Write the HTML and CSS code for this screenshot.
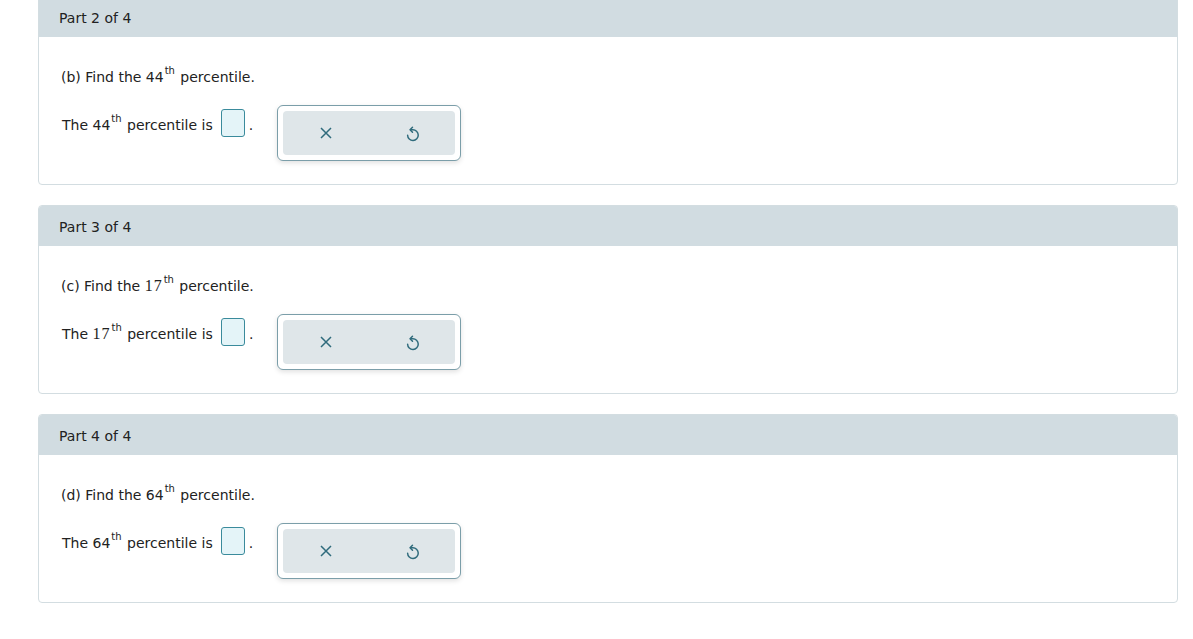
FILE: index.html
```html
<!DOCTYPE html>
<html>
<head>
<meta charset="utf-8">
<link rel="stylesheet" href="styles.css">
</head>
<body>
<div class="parts">
  <section class="card">
    <div class="card-head">Part 2 of 4</div>
    <div class="card-body">
      <p class="q">(b) Find the <span class="num">44</span><sup class="sup">th</sup> percentile.</p>
      <div class="row">
        <div class="answer">
          <span class="label">The <span class="num">44</span><sup class="sup">th</sup> percentile is</span>
          <span class="box"></span><span class="dot">.</span>
        </div>
        <div class="tools">
          <div class="tools-inner">
            <button class="tool"><svg width="12" height="12" viewBox="0 0 12 12"><path d="M1 1 L11 11 M11 1 L1 11" stroke="#2f6b7c" stroke-width="1.5" fill="none"/></svg></button>
            <button class="tool"><svg width="17" height="17" viewBox="0 0 16 16"><path d="M6.2 4.5 H8.2 A5 5 0 1 1 3.4 9.6" stroke="#2f6b7c" stroke-width="1.4" fill="none" stroke-linecap="round"/><path d="M8 2.2 L5.7 4.5 L8 6.8" stroke="#2f6b7c" stroke-width="1.4" fill="none" stroke-linecap="round" stroke-linejoin="round"/></svg></button>
          </div>
        </div>
      </div>
    </div>
  </section>
  <section class="card">
    <div class="card-head">Part 3 of 4</div>
    <div class="card-body">
      <p class="q">(c) Find the <span class="num serif">17</span><sup class="sup">th</sup> percentile.</p>
      <div class="row">
        <div class="answer">
          <span class="label">The <span class="num serif">17</span><sup class="sup">th</sup> percentile is</span>
          <span class="box"></span><span class="dot">.</span>
        </div>
        <div class="tools">
          <div class="tools-inner">
            <button class="tool"><svg width="12" height="12" viewBox="0 0 12 12"><path d="M1 1 L11 11 M11 1 L1 11" stroke="#2f6b7c" stroke-width="1.5" fill="none"/></svg></button>
            <button class="tool"><svg width="17" height="17" viewBox="0 0 16 16"><path d="M6.2 4.5 H8.2 A5 5 0 1 1 3.4 9.6" stroke="#2f6b7c" stroke-width="1.4" fill="none" stroke-linecap="round"/><path d="M8 2.2 L5.7 4.5 L8 6.8" stroke="#2f6b7c" stroke-width="1.4" fill="none" stroke-linecap="round" stroke-linejoin="round"/></svg></button>
          </div>
        </div>
      </div>
    </div>
  </section>
  <section class="card">
    <div class="card-head">Part 4 of 4</div>
    <div class="card-body">
      <p class="q">(d) Find the <span class="num">64</span><sup class="sup">th</sup> percentile.</p>
      <div class="row">
        <div class="answer">
          <span class="label">The <span class="num">64</span><sup class="sup">th</sup> percentile is</span>
          <span class="box"></span><span class="dot">.</span>
        </div>
        <div class="tools">
          <div class="tools-inner">
            <button class="tool"><svg width="12" height="12" viewBox="0 0 12 12"><path d="M1 1 L11 11 M11 1 L1 11" stroke="#2f6b7c" stroke-width="1.5" fill="none"/></svg></button>
            <button class="tool"><svg width="17" height="17" viewBox="0 0 16 16"><path d="M6.2 4.5 H8.2 A5 5 0 1 1 3.4 9.6" stroke="#2f6b7c" stroke-width="1.4" fill="none" stroke-linecap="round"/><path d="M8 2.2 L5.7 4.5 L8 6.8" stroke="#2f6b7c" stroke-width="1.4" fill="none" stroke-linecap="round" stroke-linejoin="round"/></svg></button>
          </div>
        </div>
      </div>
    </div>
  </section>
</div>
</body>
</html>
```
FILE: styles.css
```css
html, body {
  margin: 0;
  padding: 0;
  background: #ffffff;
}
body {
  font-family: "DejaVu Sans", Verdana, sans-serif;
  font-size: 14px;
  color: #222;
}
.parts {
  display: flex;
  flex-direction: column;
  gap: 20px;
  margin-top: -4px;
  padding: 0 15px 0 38px;
}
.card {
  border: 1px solid #d3dde1;
  border-radius: 4px;
  overflow: hidden;
  background: #fff;
}
.card-head {
  background: #d1dce1;
  height: 40px;
  line-height: 42px;
  padding-left: 20px;
  color: #222;
}
.card-body {
  padding: 30px 22px 23px 22px;
}
.q {
  margin: 0;
  height: 20px;
  line-height: 20px;
}
.num {
  font-size: 14px;
}
.num.serif {
  font-family: "Liberation Serif", "Times New Roman", serif;
  font-size: 16px;
  letter-spacing: 1px;
}
.sup {
  font-size: 10px;
  vertical-align: 8px;
  line-height: 0;
  margin-left: 1px;
  margin-right: 1px;
}
.row {
  display: flex;
  align-items: flex-start;
  margin-top: 18px;
}
.answer {
  display: flex;
  align-items: center;
  height: 28px;
  margin-top: 4px;
  padding-left: 1px;
}
.label {
  margin-top: 3px;
}
.box {
  display: inline-block;
  width: 22px;
  height: 26px;
  border: 1px solid #3a8b9c;
  border-radius: 3px;
  background: #e4f4f8;
  margin-left: 8px;
}
.dot {
  margin-left: 4px;
  margin-top: 3px;
}
.tools {
  margin-left: 24px;
  width: 172px;
  height: 44px;
  padding: 5px;
  border: 1px solid #7b9ea9;
  border-radius: 6px;
  background: #fff;
  box-shadow: 0 2px 5px rgba(0, 0, 0, 0.12);
}
.tools-inner {
  display: flex;
  height: 44px;
  background: #dfe6e9;
  border-radius: 4px;
}
.tool {
  flex: 1;
  border: 0;
  background: transparent;
  padding: 0;
  margin: 0;
  display: flex;
  align-items: center;
  justify-content: center;
}
.tool svg {
  display: block;
}
```
